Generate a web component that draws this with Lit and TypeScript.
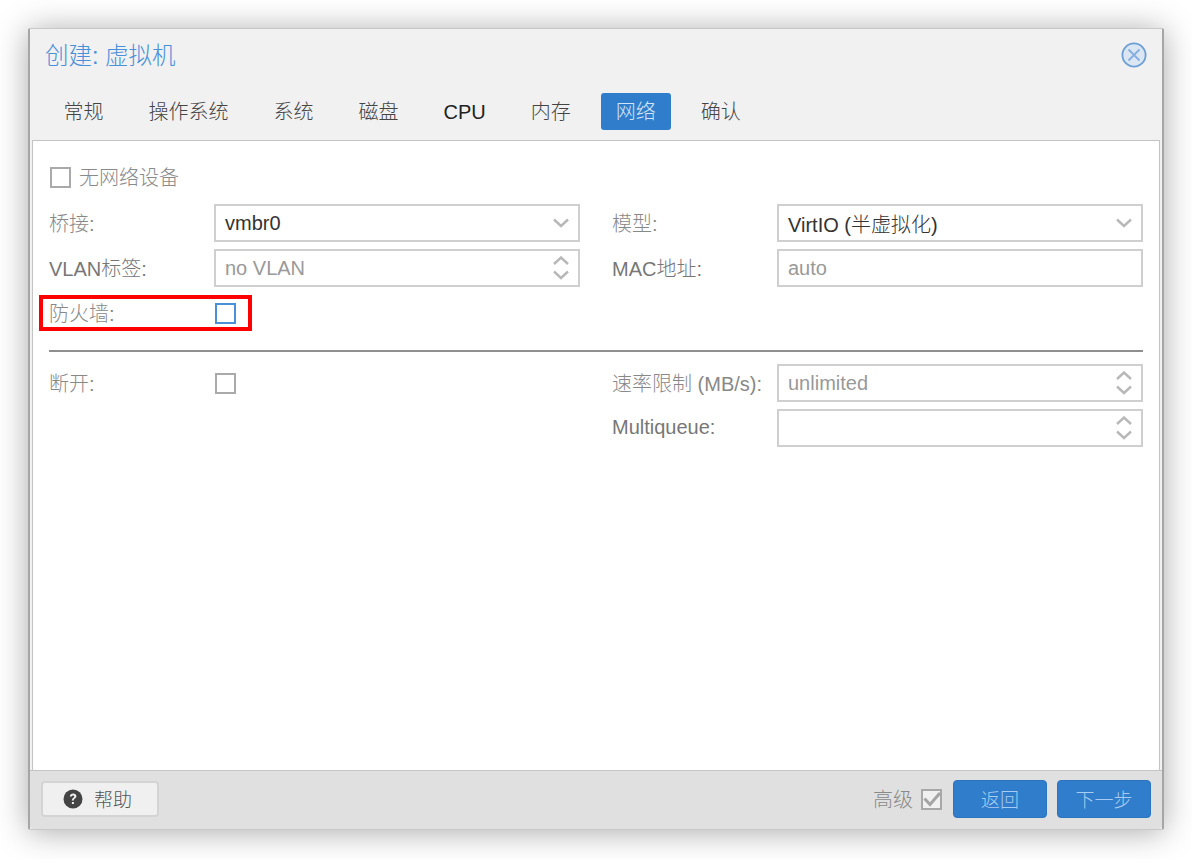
import { LitElement, html, css, svg } from "lit";
import { customElement } from "lit/decorators.js";

const chevDown = svg`<path d="M1 1.5 L8 8 L15 1.5" fill="none" stroke="#b8b8b8" stroke-width="2.4"/>`;
const chevUp = svg`<path d="M1 8 L8 1.5 L15 8" fill="none" stroke="#b8b8b8" stroke-width="2.4"/>`;

@customElement("app-root")
export class AppRoot extends LitElement {
  static styles = css`
    :host { display: block; width: 1192px; height: 859px; background: #fff; overflow: hidden;
      font-family: "Liberation Sans", "Noto Sans CJK SC", sans-serif; font-size: 20px; font-weight: 300; color: #555; }
    .page { padding: 28px; height: 859px; box-sizing: border-box; }
    .win { width: 1136px; height: 802px; box-sizing: border-box; display: flex; flex-direction: column;
      background: #f1f1f1; border: 1px solid #c8c8c8; border-left: 2px solid #a6a6a6; border-right: 2px solid #a6a6a6;
      box-shadow: 0 2px 32px rgba(0,0,0,.34); border-radius: 2px; }
    .head { height: 111px; flex: none; display: flex; flex-direction: column; padding: 0 15px 0 19px; box-sizing: border-box; }
    .title { height: 64px; flex: none; margin-left: -4px; display: flex; align-items: center; justify-content: space-between; color: #4a90d9; font-size: 23.5px; padding-bottom: 14px; box-sizing: border-box; }
    .title svg { display: block; margin-top: 2px; }
    .tabs { display: flex; gap: 15px; align-items: flex-start; margin-left: -0.5px; }
    .tab { height: 37px; line-height: 38px; padding: 0 15px; color: #444; border-radius: 3px; white-space: nowrap; }
    .tab.latin { color: #222; }
    .tab.on { background: #2f7dcb; color: #d3e4f6; }
    .panel { flex: 1; margin: 0 2px; background: #fff; border: 1px solid #c4c4c4; padding: 0 16px; box-sizing: border-box; display: flex; flex-direction: column; }
    .top { height: 63px; flex: none; display: flex; align-items: center; gap: 8px; color: #8a8a8a; padding: 9px 1px 0; box-sizing: border-box; }
    .top span:last-child { padding-bottom: 2px; }
    .cols { display: grid; grid-template-columns: 531px 531px; column-gap: 32px; }
    .col { display: flex; flex-direction: column; gap: 7px; }
    .row { display: flex; align-items: center; height: 38px; color: #888; position: relative; }
    .row > label { width: 165px; flex: none; white-space: nowrap; padding-bottom: 2px; }
    .row > .box { margin-left: 1px; }
    .row.dark { color: #777; }
    .field { flex: 1; height: 38px; box-sizing: border-box; border: 2px solid #cfcfcf; display: flex; align-items: center; justify-content: space-between; padding: 0 9px 0 9px; color: #999; background: #fff; }
    .field.val { color: #333; }
    .arrows { display: flex; flex-direction: column; gap: 4px; }
    .arrows svg { display: block; }
    .box { width: 21px; height: 21px; box-sizing: border-box; border: 2px solid #aaa; flex: none; background: #fff; }
    .box.blue { border-color: #4a90d9; }
    .mark { position: absolute; left: -10px; top: 1px; width: 213px; height: 36px; box-sizing: border-box; border: 4px solid #f00; pointer-events: none; }
    .rule { height: 2px; background: #8f8f8f; margin: 18px 0 12px; flex: none; }
    .foot { height: 59px; flex: none; background: #e0e0e0; display: flex; align-items: center; padding: 0 11px 2px 11px; box-sizing: border-box; margin-top: -1px; border-top: 1px solid #c4c4c4; border-radius: 0 0 3px 3px; }
    .help { width: 118px; height: 36px; box-sizing: border-box; border: 2px solid #d4d4d4; background: #f0f0f0; border-radius: 4px; display: flex; align-items: center; justify-content: flex-start; gap: 11px; padding-left: 20px; color: #555; font-size: 19px; }
    .help svg { display: block; }
    .help span { padding-bottom: 2px; }
    .spacer { flex: 1; }
    .adv { display: flex; align-items: center; gap: 8px; color: #8a8a8a; margin-right: 11px; }
    .adv span { padding-bottom: 2px; }
    .adv svg { display: block; }
    .btn { width: 94px; height: 38px; box-sizing: border-box; border: 1px solid #2a74c0; background: #2f7dcb; border-radius: 4px; color: #a9ccf0; display: flex; align-items: center; justify-content: center; font-size: 19px; padding-bottom: 2px; }
    .btn + .btn { margin-left: 10px; }
  `;

  private arrows() {
    return html`<span class="arrows">
      <svg width="16" height="10" viewBox="0 0 16 10">${chevUp}</svg>
      <svg width="16" height="10" viewBox="0 0 16 10">${chevDown}</svg>
    </span>`;
  }
  private down() {
    return html`<svg width="16" height="10" viewBox="0 0 16 10">${chevDown}</svg>`;
  }

  render() {
    const tabs = ["常规", "操作系统", "系统", "磁盘", "CPU", "内存", "网络", "确认"];
    return html`<div class="page"><div class="win">
      <div class="head">
        <div class="title"><span>创建: 虚拟机</span>
          <svg width="26" height="26" viewBox="0 0 26 26">
            <circle cx="13" cy="13" r="11.6" fill="#dbe6f3" stroke="#6c9fd6" stroke-width="1.8"/>
            <path d="M7.5 7.5 L18.5 18.5 M18.5 7.5 L7.5 18.5" stroke="#86aee0" stroke-width="1.8"/>
          </svg>
        </div>
        <div class="tabs">
          ${tabs.map(t => html`<div class="tab ${t === "网络" ? "on" : ""} ${t === "CPU" ? "latin" : ""}">${t}</div>`)}
        </div>
      </div>
      <div class="panel">
        <div class="top"><span class="box"></span><span>无网络设备</span></div>
        <div class="cols">
          <div class="col">
            <div class="row"><label>桥接:</label><div class="field val"><span>vmbr0</span>${this.down()}</div></div>
            <div class="row dark"><label>VLAN标签:</label><div class="field"><span>no VLAN</span>${this.arrows()}</div></div>
            <div class="row"><label>防火墙:</label><span class="box blue"></span><div class="mark"></div></div>
          </div>
          <div class="col">
            <div class="row"><label>模型:</label><div class="field val"><span>VirtIO (半虚拟化)</span>${this.down()}</div></div>
            <div class="row dark"><label>MAC地址:</label><div class="field"><span>auto</span></div></div>
          </div>
        </div>
        <div class="rule"></div>
        <div class="cols">
          <div class="col">
            <div class="row"><label>断开:</label><span class="box"></span></div>
          </div>
          <div class="col">
            <div class="row"><label>速率限制 (MB/s):</label><div class="field"><span>unlimited</span>${this.arrows()}</div></div>
            <div class="row dark"><label>Multiqueue:</label><div class="field"><span></span>${this.arrows()}</div></div>
          </div>
        </div>
      </div>
      <div class="foot">
        <div class="help">
          <svg width="20" height="20" viewBox="0 0 20 20">
            <circle cx="10" cy="10" r="9.5" fill="#444"/>
            <path d="M6.8 7.6 C6.9 5.6 8.4 4.6 10.2 4.6 C12 4.6 13.4 5.7 13.4 7.3 C13.4 9.5 10.8 9.4 10.8 11.5 L8.9 11.5 C8.9 8.7 11.2 8.8 11.2 7.4 C11.2 6.7 10.7 6.4 10.1 6.4 C9.4 6.4 8.9 6.9 8.8 7.6 Z M8.9 12.9 H10.9 V15 H8.9 Z" fill="#f0f0f0"/>
          </svg>
          <span>帮助</span>
        </div>
        <div class="spacer"></div>
        <div class="adv"><span>高级</span>
          <svg width="21" height="21" viewBox="0 0 21 21">
            <rect x="1" y="1" width="19" height="19" fill="#f0f0f0" stroke="#a8a8a8" stroke-width="2"/>
            <path d="M3.5 9.5 L9 15.5 L19 4" fill="none" stroke="#a4a4a4" stroke-width="3"/>
          </svg>
        </div>
        <div class="btn">返回</div>
        <div class="btn">下一步</div>
      </div>
    </div></div>`;
  }
}
